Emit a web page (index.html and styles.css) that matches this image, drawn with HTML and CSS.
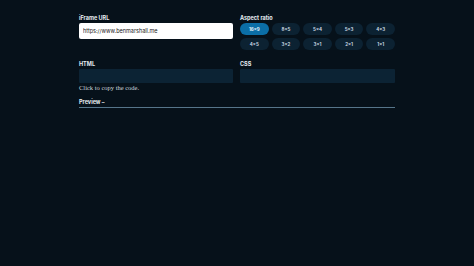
FILE: index.html
```html
<!DOCTYPE html>
<html>
<head>
<meta charset="utf-8">
<link rel="stylesheet" href="styles.css">
</head>
<body>
<main class="wrap">
  <div class="row top">
    <div class="col">
      <label class="lbl">iFrame URL</label>
      <input class="url" type="text" value="https://www.benmarshall.me">
    </div>
    <div class="col">
      <label class="lbl">Aspect ratio</label>
      <div class="ratios">
        <span class="btn active">16x9</span>
        <span class="btn">8x5</span>
        <span class="btn">5x4</span>
        <span class="btn">5x3</span>
        <span class="btn">4x3</span>
        <span class="btn">4x5</span>
        <span class="btn">3x2</span>
        <span class="btn">3x1</span>
        <span class="btn">2x1</span>
        <span class="btn">1x1</span>
      </div>
    </div>
  </div>
  <div class="row code">
    <div class="col">
      <label class="lbl">HTML</label>
      <div class="box"></div>
      <p class="note">Click to copy the code.</p>
    </div>
    <div class="col">
      <label class="lbl">CSS</label>
      <div class="box"></div>
    </div>
  </div>
  <div class="preview">Preview –</div>
</main>
</body>
</html>
```
FILE: styles.css
```css
html, body { margin: 0; padding: 0; }
body {
  background: #06111a;
  color: #e6edf2;
  font-family: "Inter", "Liberation Sans", sans-serif;
  width: 474px;
  height: 266px;
  overflow: hidden;
}
.wrap {
  width: 316px;
  margin: 0 0 0 79px;
  padding-top: 15px;
}
.row {
  display: grid;
  grid-template-columns: 154px 155px;
  column-gap: 7px;
}
.col { display: flex; flex-direction: column; }
.lbl {
  font-size: 5.5px;
  font-weight: 700;
  line-height: 7px;
  height: 7px;
  margin-bottom: 1px;
}
.url {
  box-sizing: border-box;
  height: 16px;
  border: none;
  border-radius: 2px;
  background: #fff;
  color: #222;
  font-family: "Inter", "Liberation Sans", sans-serif;
  font-size: 5.5px;
  padding: 0 4px;
  margin: 0;
  outline: none;
}
.ratios {
  display: grid;
  grid-template-columns: repeat(5, 1fr);
  column-gap: 3px;
  row-gap: 3px;
}
.btn {
  height: 12px;
  border-radius: 6px;
  background: #0c2232;
  color: #c9d6e0;
  font-size: 4.5px;
  font-weight: 700;
  display: flex;
  align-items: center;
  justify-content: center;
}
.btn.active { background: #0b6ea6; color: #e8f3fa; }
.code { margin-top: 11px; }
.box {
  height: 14px;
  background: #0c2334;
  border-radius: 1px;
}
.note {
  margin: 0;
  font-family: "Liberation Serif", serif;
  font-size: 6.5px;
  line-height: 9px;
  color: #cfd8df;
}
.preview {
  margin-top: 7px;
  font-size: 5.5px;
  font-weight: 700;
  line-height: 7px;
  padding-bottom: 1px;
  border-bottom: 1.5px solid #56758a;
}
```
